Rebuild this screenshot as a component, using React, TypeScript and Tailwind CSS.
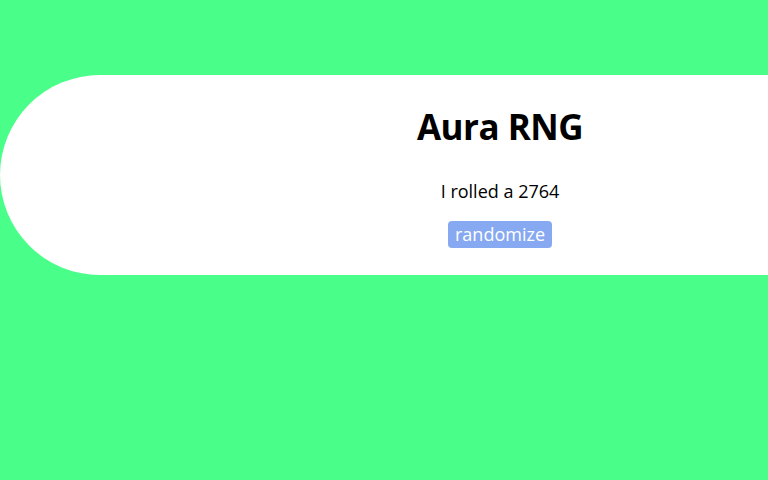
export default function App() {
  return (
    <div
      className="w-[768px] h-[480px] overflow-hidden bg-[#4aff89] pt-[75px]"
      style={{ fontFamily: '"Open Sans", "Noto Sans", sans-serif' }}
    >
      <div className="w-[1000px] h-[200px] rounded-l-[100px] bg-white flex flex-col items-center pt-[28px]">
        <h1 className="text-[35px] leading-[48px] font-bold text-black tracking-[-0.5px]">Aura RNG</h1>
        <p className="mt-[28px] text-[18px] leading-[24px] text-black">I rolled a 2764</p>
        <button className="mt-[18px] px-[7px] h-[27px] rounded-[4px] bg-[#87a9f1] text-white text-[18px] leading-[27px]">
          randomize
        </button>
      </div>
    </div>
  );
}
